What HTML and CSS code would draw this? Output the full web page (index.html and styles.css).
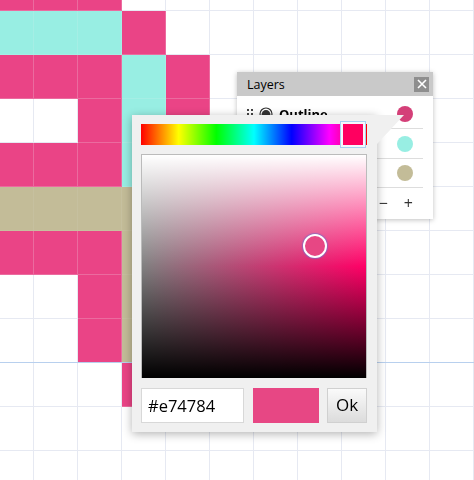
FILE: index.html
```html
<!DOCTYPE html>
<html lang="en">
<head>
<meta charset="utf-8">
<title>Layers and colour picker</title>
<link rel="stylesheet" href="styles.css">
</head>
<body>
<div class="stage">
  <div class="grid">
    <i class="p"></i><i class="p"></i><i class="p"></i><i></i><i></i><i></i><i></i><i></i><i></i><i></i><i></i>
    <i class="t"></i><i class="t"></i><i class="t"></i><i class="p"></i><i></i><i></i><i></i><i></i><i></i><i></i><i></i>
    <i class="p"></i><i class="p"></i><i class="p"></i><i class="t"></i><i class="p"></i><i></i><i></i><i></i><i></i><i></i><i></i>
    <i></i><i></i><i class="p"></i><i class="t"></i><i class="p"></i><i></i><i></i><i></i><i></i><i></i><i></i>
    <i class="p"></i><i class="p"></i><i class="p"></i><i class="t"></i><i class="p"></i><i></i><i></i><i></i><i></i><i></i><i></i>
    <i class="k"></i><i class="k"></i><i class="k"></i><i class="k"></i><i class="k"></i><i></i><i></i><i></i><i></i><i></i><i></i>
    <i class="p"></i><i class="p"></i><i class="p"></i><i class="k"></i><i class="p"></i><i></i><i></i><i></i><i></i><i></i><i></i>
    <i></i><i></i><i class="p"></i><i class="k"></i><i></i><i></i><i></i><i></i><i></i><i></i><i></i>
    <i></i><i></i><i class="p"></i><i class="k"></i><i></i><i></i><i></i><i></i><i></i><i></i><i></i>
    <i></i><i></i><i></i><i class="p"></i><i></i><i></i><i></i><i></i><i></i><i></i><i></i>
    <i></i><i></i><i></i><i></i><i></i><i></i><i></i><i></i><i></i><i></i><i></i>
    <i></i><i></i><i></i><i></i><i></i><i></i><i></i><i></i><i></i><i></i><i></i>
  </div>
  <div class="guide"></div>

  <section class="layers">
    <header class="layers-head">
      <span>Layers</span>
      <button class="close" type="button">
        <svg viewBox="0 0 10 10" width="10" height="10"><path d="M1 1 9 9M9 1 1 9" stroke="#fff" stroke-width="1.6" fill="none"/></svg>
      </button>
    </header>
    <div class="layer">
      <div class="layer-name">
        <svg class="grip" viewBox="0 0 6 12" width="6" height="12"><path d="M0 1h2v2H0zM4 1h2v2H4zM0 5h2v2H0zM4 5h2v2H4zM0 9h2v2H0zM4 9h2v2H4z" fill="#444"/></svg>
        <svg class="eye" viewBox="0 0 14 14" width="14" height="14"><circle cx="7" cy="7" r="6" fill="none" stroke="#333" stroke-width="1.2"/><path d="M2.5 8a4.5 5 0 0 1 9 0z" fill="#333"/></svg>
        <b>Outline</b>
      </div>
      <span class="dot dot-pink"></span>
    </div>
    <div class="layer"><span class="dot dot-teal"></span></div>
    <div class="layer"><span class="dot dot-tan"></span></div>
    <div class="layers-foot"><span>−</span><span>+</span></div>
  </section>

  <section class="picker">
    <div class="tail"></div>
    <div class="hue"><div class="hue-handle"></div></div>
    <div class="field"><div class="marker"></div></div>
    <div class="picker-foot">
      <div class="hex">#e74784</div>
      <div class="preview"></div>
      <button class="ok" type="button">Ok</button>
    </div>
  </section>
</div>
</body>
</html>
```
FILE: styles.css
```css
* { box-sizing: border-box; }
html, body { margin: 0; height: 100%; background: #fff; overflow: hidden; }
body { font-family: "Open Sans", "Liberation Sans", sans-serif; color: #000; }

.stage {
  position: relative;
  width: 474px;
  height: 480px;
  overflow: hidden;
  filter: blur(0.45px);
}

.grid {
  display: grid;
  grid-template-columns: repeat(11, 44px);
  grid-auto-rows: 44px;
  margin: -33px 0 0 -10px;
  width: 484px;
}
.grid i {
  display: block;
  border-right: 1px solid rgba(222, 226, 238, 0.75);
  border-bottom: 1px solid rgba(222, 226, 238, 0.75);
}
.grid .p { background: #ea4486; border-color: rgba(240, 200, 220, 0.3); }
.grid .t { background: #98eee3; border-color: rgba(222, 240, 238, 0.2); }
.grid .k { background: #c3bc98; border-color: rgba(222, 226, 210, 0.12); }

.guide {
  position: absolute;
  left: 0;
  right: 0;
  top: 362px;
  height: 1px;
  background: #b8d0ee;
}

.layers {
  position: absolute;
  left: 237px;
  top: 72px;
  width: 196px;
  height: 147px;
  background: #fff;
  display: flex;
  flex-direction: column;
  box-shadow: 0 1px 5px rgba(0, 0, 0, 0.25);
}
.layers-head {
  height: 24px;
  flex: none;
  background: #c9c9c9;
  display: flex;
  align-items: center;
  justify-content: space-between;
  padding: 0 4px 0 10px;
  font-size: 12.5px;
}
.close {
  width: 15px;
  height: 15px;
  padding: 0;
  border: 0;
  background: #8e8e8e;
  display: flex;
  align-items: center;
  justify-content: center;
}
.layer {
  height: 29.3px;
  margin: 0 10px;
  border-bottom: 1px solid #ddd;
  display: flex;
  align-items: center;
  justify-content: flex-end;
  flex: none;
}
.layer:first-of-type { height: 33.4px; padding-top: 4px; }
.layer-name {
  display: flex;
  align-items: center;
  gap: 6px;
  margin-right: auto;
  font-size: 13px;
}
.dot {
  width: 16px;
  height: 16px;
  border-radius: 50%;
  margin-right: 10px;
}
.dot-pink { background: #d43f78; }
.dot-teal { background: #98eee3; }
.dot-tan { background: #c3bc98; }
.layers-foot {
  flex: 1;
  display: flex;
  align-items: center;
  justify-content: flex-end;
  gap: 16px;
  padding-right: 20px;
  font-size: 16px;
  color: #333;
}

.picker {
  position: absolute;
  left: 132px;
  top: 115px;
  width: 245px;
  height: 317px;
  padding: 9px 10px 9px 9px;
  background: #f0f0f0;
  display: flex;
  flex-direction: column;
  box-shadow: 0 2px 9px rgba(0, 0, 0, 0.3);
}
.tail {
  position: absolute;
  left: 245px;
  top: 0;
  width: 27px;
  height: 29px;
  background: #f0f0f0;
  clip-path: polygon(0 0, 100% 0, 0 100%);
}
.hue {
  position: relative;
  height: 21px;
  flex: none;
  background: linear-gradient(to right, #f00, #ff0 16.67%, #0f0 33.33%, #0ff 50%, #00f 66.67%, #f0f 83.33%, #f00);
}
.hue-handle {
  position: absolute;
  left: 200px;
  top: -2px;
  width: 24px;
  height: 25px;
  background: #ff0060;
  border: 2px solid #f4f8fc;
  outline: 1px solid #a8d0f0;
}
.field {
  position: relative;
  height: 224px;
  flex: none;
  margin-top: 9px;
  border: 1px solid #bbb;
  border-bottom: 0;
  background:
    linear-gradient(to bottom, #fff, rgba(255, 255, 255, 0) 50%, rgba(0, 0, 0, 0) 50%, #000),
    linear-gradient(to right, #808080, #ff0066);
}
.marker {
  position: absolute;
  left: 161px;
  top: 79px;
  width: 24px;
  height: 24px;
  border-radius: 50%;
  background: #e74784;
  border: 2px solid #fff;
  box-shadow: 0 0 1px 1px rgba(120, 110, 200, 0.7);
}
.picker-foot {
  display: flex;
  margin-top: 10px;
  height: 35px;
  flex: none;
}
.hex {
  width: 103px;
  background: #fff;
  border: 1px solid #d8d8d8;
  display: flex;
  align-items: center;
  padding-left: 6px;
  font-size: 16.5px;
  font-weight: 500;
}
.preview {
  width: 66px;
  margin-left: 9px;
  background: #e74784;
}
.ok {
  width: 40px;
  margin-left: 8px;
  padding: 0 0 2px;
  border: 1px solid #d0d0d0;
  background: linear-gradient(to bottom, #fafafa, #dcdcdc);
  font: 500 17px "Open Sans", "Liberation Sans", sans-serif;
  color: #000;
}
```
